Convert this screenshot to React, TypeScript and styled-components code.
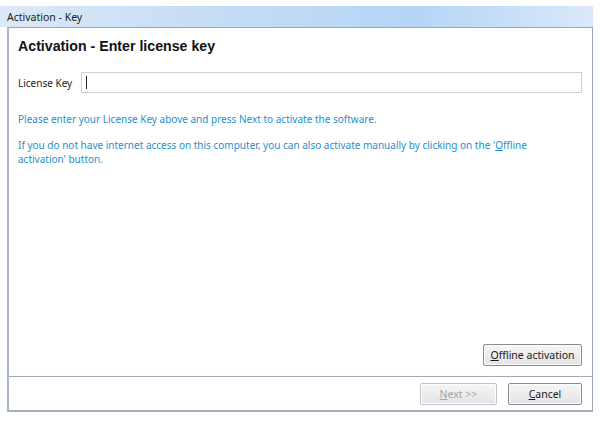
import React from "react";
import styled, { createGlobalStyle } from "styled-components";

const Global = createGlobalStyle`
  html, body { margin: 0; padding: 0; background: #ffffff; }
  body { font-family: "Noto Sans", "Open Sans", sans-serif; }
`;

const Window = styled.div`
  width: 593px;
  margin-top: 6px;
  display: flex;
  flex-direction: column;
`;

const TitleBar = styled.div`
  height: 21px;
  display: flex;
  align-items: center;
  padding-left: 7px;
  background: linear-gradient(90deg, #dce9f8 0%, #c9def5 30%, #b5d5f6 70%, #cfe3f8 92%, #dbe9f9 100%);
  font-size: 10.5px;
  color: #1b1b1b;
`;

const Frame = styled.div`
  margin-left: 7px;
  height: 382px;
  border: 1px solid #9ba6b7;
  border-left: 2px solid #a9b5c9;
  border-bottom: 2px solid #a2aec2;
  display: flex;
  flex-direction: column;
  background: #fff;
`;

const Content = styled.div`
  flex: 1;
  display: flex;
  flex-direction: column;
  padding: 8px 10px 10px 9px;
`;

const Heading = styled.h1`
  margin: 0;
  font-family: "Liberation Sans", Arial, sans-serif;
  font-weight: bold;
  font-size: 14.2px;
  color: #111;
  line-height: 20px;
`;

const Row = styled.div`
  display: flex;
  align-items: center;
  margin-top: 16px;
  gap: 9px;
`;

const Label = styled.span`
  font-size: 10px;
  color: #222;
`;

const Input = styled.div`
  flex: 1;
  height: 19px;
  border: 1px solid #c9d2dc;
  display: flex;
  align-items: center;
  padding-left: 4px;
`;

const Caret = styled.span`
  width: 1px;
  height: 13px;
  background: #222;
`;

const Info = styled.p<{ $gap: number }>`
  margin: ${(p) => p.$gap}px 0 0;
  font-size: 10px;
  line-height: 14px;
  color: #1f8fcc;
`;

const Spacer = styled.div`
  flex: 1;
`;

const ButtonRow = styled.div`
  display: flex;
  justify-content: flex-end;
  gap: 10px;
`;

const Button = styled.button<{ $w: number; $disabled?: boolean }>`
  width: ${(p) => p.$w}px;
  height: 22px;
  padding: 0;
  font-family: "Noto Sans", sans-serif;
  font-size: 10.5px;
  color: ${(p) => (p.$disabled ? "#a4a4a4" : "#1a1a1a")};
  background: linear-gradient(#f6f6f6, #e4e4e4);
  border: 1px solid ${(p) => (p.$disabled ? "#c5c5c5" : "#8a8a8a")};
  border-radius: 2px;
  box-shadow: inset 0 0 0 1px #fdfdfd;
  u { text-decoration: underline; }
`;

const Divider = styled.div`
  height: 1px;
  background: #a0aab8;
`;

const Footer = styled.div`
  height: 33px;
  display: flex;
  align-items: center;
  justify-content: flex-end;
  padding-right: 10px;
  gap: 11px;
`;

export default function App() {
  return (
    <>
      <Global />
      <Window>
        <TitleBar>Activation - Key</TitleBar>
        <Frame>
          <Content>
            <Heading>Activation - Enter license key</Heading>
            <Row>
              <Label>License Key</Label>
              <Input>
                <Caret />
              </Input>
            </Row>
            <Info $gap={19}>Please enter your License Key above and press Next to activate the software.</Info>
            <Info $gap={12}>
              If you do not have internet access on this computer, you can also activate manually by clicking on the '<u>O</u>ffline
              <br />
              activation' button.
            </Info>
            <Spacer />
            <ButtonRow>
              <Button $w={99}>
                <u>O</u>ffline activation
              </Button>
            </ButtonRow>
          </Content>
          <Divider />
          <Footer>
            <Button $w={77} $disabled>
              <u>N</u>ext &gt;&gt;
            </Button>
            <Button $w={74}>
              <u>C</u>ancel
            </Button>
          </Footer>
        </Frame>
      </Window>
    </>
  );
}
